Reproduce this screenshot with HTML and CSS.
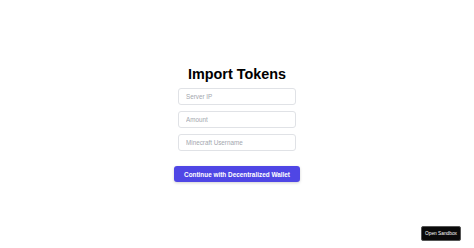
FILE: index.html
```html
<!DOCTYPE html>
<html>
<head>
<meta charset="utf-8">
<link rel="stylesheet" href="styles.css">
</head>
<body>
<main class="page">
  <form class="card">
    <h1 class="title">Import Tokens</h1>
    <div class="fields">
      <input class="field" type="text" placeholder="Server IP">
      <input class="field" type="text" placeholder="Amount">
      <input class="field" type="text" placeholder="Minecraft Username">
    </div>
    <button class="primary" type="button">Continue with Decentralized Wallet</button>
  </form>
</main>
<a class="sandbox">Open Sandbox</a>
</body>
</html>
```
FILE: styles.css
```css
html, body {
  margin: 0;
  padding: 0;
  background: #ffffff;
  font-family: "Liberation Sans", Arial, sans-serif;
}
.page {
  width: 474px;
  height: 248px;
  display: flex;
  justify-content: center;
}
.card {
  display: flex;
  flex-direction: column;
  align-items: center;
  padding-top: 65px;
  margin: 0;
}
.title {
  margin: 0;
  font-size: 14.4px;
  line-height: 18px;
  font-weight: 700;
  color: #000;
}
.fields {
  display: flex;
  flex-direction: column;
  gap: 6px;
  margin-top: 5px;
}
.field {
  box-sizing: border-box;
  width: 118px;
  height: 17px;
  margin: 0;
  padding: 0 7px;
  border: 1px solid #e0e2e6;
  border-radius: 3px;
  font-family: "Liberation Sans", Arial, sans-serif;
  font-size: 6.3px;
  color: #333;
  background: #fff;
  outline: none;
}
.field::placeholder {
  color: #a3a7ae;
}
.primary {
  box-sizing: border-box;
  width: 126px;
  height: 16px;
  margin-top: 15px;
  padding: 0;
  border: none;
  border-radius: 3px;
  background: #4f46e5;
  color: #fff;
  font-family: "Liberation Sans", Arial, sans-serif;
  font-size: 6.4px;
  font-weight: 700;
  box-shadow: 0 1px 3px rgba(0,0,0,0.18);
}
.sandbox {
  position: absolute;
  left: 421px;
  top: 226px;
  width: 40px;
  height: 15px;
  box-sizing: border-box;
  display: flex;
  align-items: center;
  justify-content: center;
  background: #0a0a0a;
  border: 1px solid #555;
  border-radius: 2px;
  color: #fff;
  font-size: 4.8px;
  font-family: "Liberation Sans", Arial, sans-serif;
}
```
